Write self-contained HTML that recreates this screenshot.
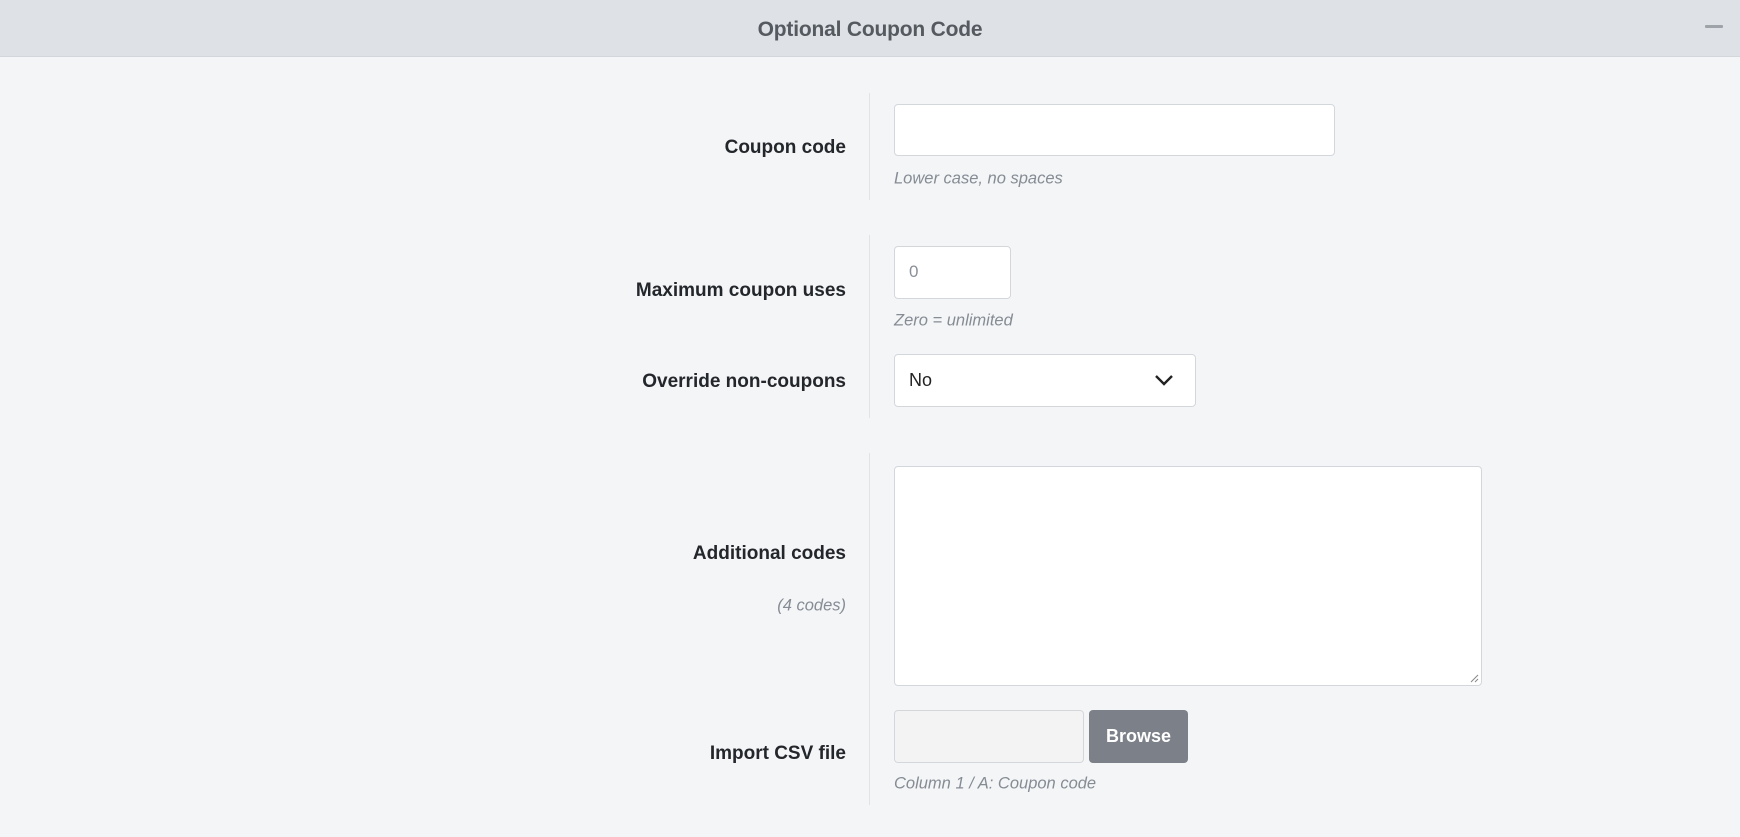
<!DOCTYPE html>
<html><head><meta charset="utf-8"><style>
*{box-sizing:border-box;margin:0;padding:0}
body{width:1740px;height:837px;background:#f4f5f7;font-family:"Liberation Sans",Arial,sans-serif;position:relative;overflow:hidden}
.hdr{position:absolute;left:0;top:0;width:1740px;height:57px;background:#dee1e5;border-bottom:1px solid #d3d6da}
.hdr .t{position:absolute;left:0;width:1740px;top:18px;text-align:center;font-size:21px;color:#555a60;font-weight:bold;letter-spacing:-0.2px}
.minus{position:absolute;left:1705px;top:25px;width:18px;height:3px;background:#9ea3a9;border-radius:1px}
.div{position:absolute;left:869px;width:1px;background:#e1e3e6}
.lbl{position:absolute;right:894px;font-size:19px;font-weight:bold;color:#23262a;white-space:nowrap;transform:translateY(-50%)}
.hint{position:absolute;left:894px;font-size:16.5px;font-style:italic;color:#868c94;transform:translateY(-50%);white-space:nowrap}
.box{position:absolute;left:894px;background:#fff;border:1.5px solid #d3d7dc;border-radius:4px}
</style></head><body>
<div class="hdr"><div class="t">Optional Coupon Code</div><div class="minus"></div></div>

<div class="div" style="top:93px;height:107px"></div>
<div class="div" style="top:235px;height:183px"></div>
<div class="div" style="top:453px;height:352px"></div>

<div class="lbl" style="top:148px">Coupon code</div>
<div class="box" style="top:104px;width:441px;height:52px"></div>
<div class="hint" style="top:179px">Lower case, no spaces</div>

<div class="lbl" style="top:291px">Maximum coupon uses</div>
<div class="box" style="top:246px;width:117px;height:53px"><span style="position:absolute;left:14px;top:15px;font-size:17px;color:#8a9097">0</span></div>
<div class="hint" style="top:321px">Zero = unlimited</div>

<div class="lbl" style="top:382px">Override non-coupons</div>
<div class="box" style="top:354px;width:302px;height:53px"><span style="position:absolute;left:14px;top:15px;font-size:18px;color:#222">No</span>
<svg style="position:absolute;left:259px;top:18px" width="20" height="14" viewBox="0 0 20 14"><path d="M2 3 L10 11 L18 3" fill="none" stroke="#222" stroke-width="2.4"/></svg></div>

<div class="lbl" style="top:554px">Additional codes</div>
<div class="lbl" style="top:606px;font-weight:normal;font-style:italic;font-size:16.5px;color:#868c94">(4 codes)</div>
<div class="box" style="top:466px;width:588px;height:220px">
<svg style="position:absolute;right:2px;bottom:2px" width="10" height="10"><path d="M9 2 L2 9 M9 6 L6 9" stroke="#888" stroke-width="1"/></svg></div>

<div class="lbl" style="top:754px">Import CSV file</div>
<div class="box" style="top:710px;width:190px;height:53px;background:#f3f3f4"></div>
<div style="position:absolute;left:1089px;top:710px;width:99px;height:53px;background:#7b8089;border-radius:4px;color:#fff;font-weight:bold;font-size:18px;text-align:center;line-height:53px">Browse</div>
<div class="hint" style="top:784px">Column 1 / A: Coupon code</div>
</body></html>
